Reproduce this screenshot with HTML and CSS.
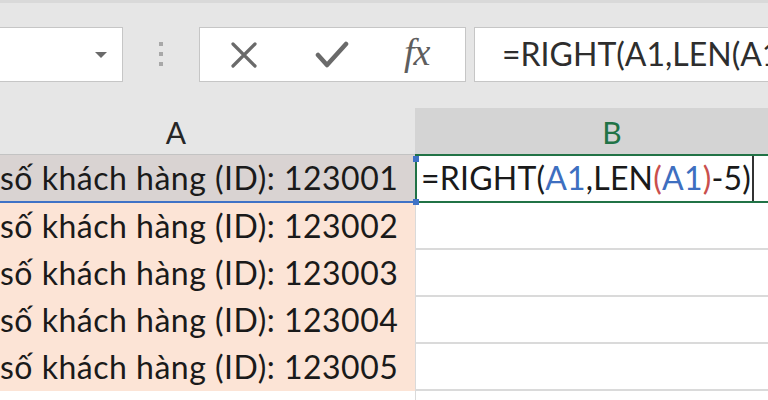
FILE: index.html
```html
<!DOCTYPE html>
<html lang="vi">
<head>
    <meta charset="UTF-8">
    <meta name="viewport" content="width=device-width, initial-scale=1.0">
    <title>Excel - RIGHT</title>
    <link rel="stylesheet" href="styles.css">
</head>
<body>
    <div class="ribbon">
        <div class="namebox">
            <span class="caret"></span>
        </div>
        <div class="grip"><i></i><i></i><i></i></div>
        <div class="fxbuttons">
            <svg class="ico" width="30" height="30" viewBox="0 0 30 30">
                <path d="M4 4 L26 26 M26 4 L4 26" stroke="#6a6a6a" stroke-width="3.2" stroke-linecap="round" fill="none"/>
            </svg>
            <svg class="ico" width="34" height="30" viewBox="0 0 34 30">
                <path d="M3 15 L12 25 L31 4" stroke="#6a6a6a" stroke-width="4.5" stroke-linecap="round" stroke-linejoin="round" fill="none"/>
            </svg>
            <span class="fx">fx</span>
        </div>
        <div class="formulabar">=RIGHT(A1,LEN(A1)-5)</div>
    </div>

    <div class="sheet">
        <div class="colhead">A</div>
        <div class="colhead active">B</div>

        <div class="cell a sel">số khách hàng (ID): 123001</div>
        <div class="cell b edit">
            <span>=RIGHT(</span><span class="ref">A1</span><span>,LEN</span><span class="par">(</span><span class="ref">A1</span><span class="par">)</span><span>-5)</span>
            <span class="cursor"></span>
        </div>

        <div class="cell a">số khách hàng (ID): 123002</div>
        <div class="cell b"></div>
        <div class="cell a">số khách hàng (ID): 123003</div>
        <div class="cell b"></div>
        <div class="cell a">số khách hàng (ID): 123004</div>
        <div class="cell b"></div>
        <div class="cell a">số khách hàng (ID): 123005</div>
        <div class="cell b"></div>
        <div class="cell empty"></div>
        <div class="cell b last"></div>
    </div>
</body>
</html>
```

FILE: styles.css
```css
body { margin: 0; overflow: hidden; width: 768px; height: 400px; background: #fff; font-family: Lato, "Open Sans", sans-serif; color: #1a1a1a; }

.ribbon { background: #e6e6e6; border-top: 3px solid #d9d9d9; display: flex; align-items: flex-start; padding-top: 24px; box-sizing: border-box; height: 108px; }
.namebox { width: 123px; height: 55px; background: #fff; border: 1px solid #c6c6c6; border-left: none; box-sizing: border-box; position: relative; }
.caret { position: absolute; left: 95px; top: 24px; border-left: 6px solid transparent; border-right: 6px solid transparent; border-top: 6px solid #6a6a6a; }
.grip { width: 76px; display: flex; flex-direction: column; align-items: center; gap: 6px; padding-top: 15px; }
.grip i { width: 4px; height: 4px; background: #a8a8a8; display: block; }
.fxbuttons { width: 267px; height: 55px; background: #fff; border: 1px solid #c6c6c6; box-sizing: border-box; display: flex; align-items: center; padding-left: 29px; }
.fxbuttons .ico:first-child { margin-right: 56px; }
.fxbuttons .ico:nth-child(2) { margin-right: 55px; }
.fx { font-family: "Liberation Serif", "DejaVu Serif", serif; font-style: italic; font-size: 38px; color: #5e5e5e; letter-spacing: -1px; margin-top: -6px; }
.formulabar { flex: 1; margin-left: 8px; height: 55px; background: #fff; border: 1px solid #c6c6c6; border-right: none; box-sizing: border-box; padding-left: 27px; font-size: 32px; line-height: 52px; color: #2e2e2e; white-space: nowrap; overflow: hidden; }

.sheet { display: grid; grid-template-columns: 415px 1fr; grid-template-rows: 47px 48px repeat(4, 47px) 1fr; height: 292px; overflow: hidden; }
.colhead { background: #e6e6e6; border-bottom: 1px solid #c3c3c3; text-align: center; font-size: 30px; line-height: 48px; color: #262626; padding-right: 63px; }
.colhead.active { background: #d4d4d4; color: #217346; padding-right: 0; padding-left: 41px; }

.cell { box-sizing: border-box; font-size: 32px; letter-spacing: 0.5px; white-space: nowrap; overflow: hidden; line-height: 46px; }
.cell.a { background: #fce4d6; text-align: right; padding-right: 17px; }
.cell.sel { background: #d9d3d2; border-bottom: 2px solid #3f72c6; position: relative; overflow: visible; }
.cell.sel::before, .cell.sel::after { content: ""; position: absolute; right: -4px; width: 6px; height: 6px; background: #3f72c6; z-index: 2; }
.cell.sel::before { top: 1px; }
.cell.sel::after { bottom: -4px; }
.cell.b { border-bottom: 2px solid #dadada; border-left: 1px solid #dadada; }
.cell.last { border-bottom: none; }
.cell.empty { background: #fff; }
.cell.edit { border: 2px solid #217346; border-right: none; margin-top: -1px; padding-left: 4px; position: relative; line-height: 44px; letter-spacing: 0.2px; color: #1a1a1a; }
.ref { color: #3e6fc0; }
.par { color: #c9504d; }
.cursor { position: absolute; left: 335px; top: 0; bottom: 0; width: 2px; background: #333; }
```
